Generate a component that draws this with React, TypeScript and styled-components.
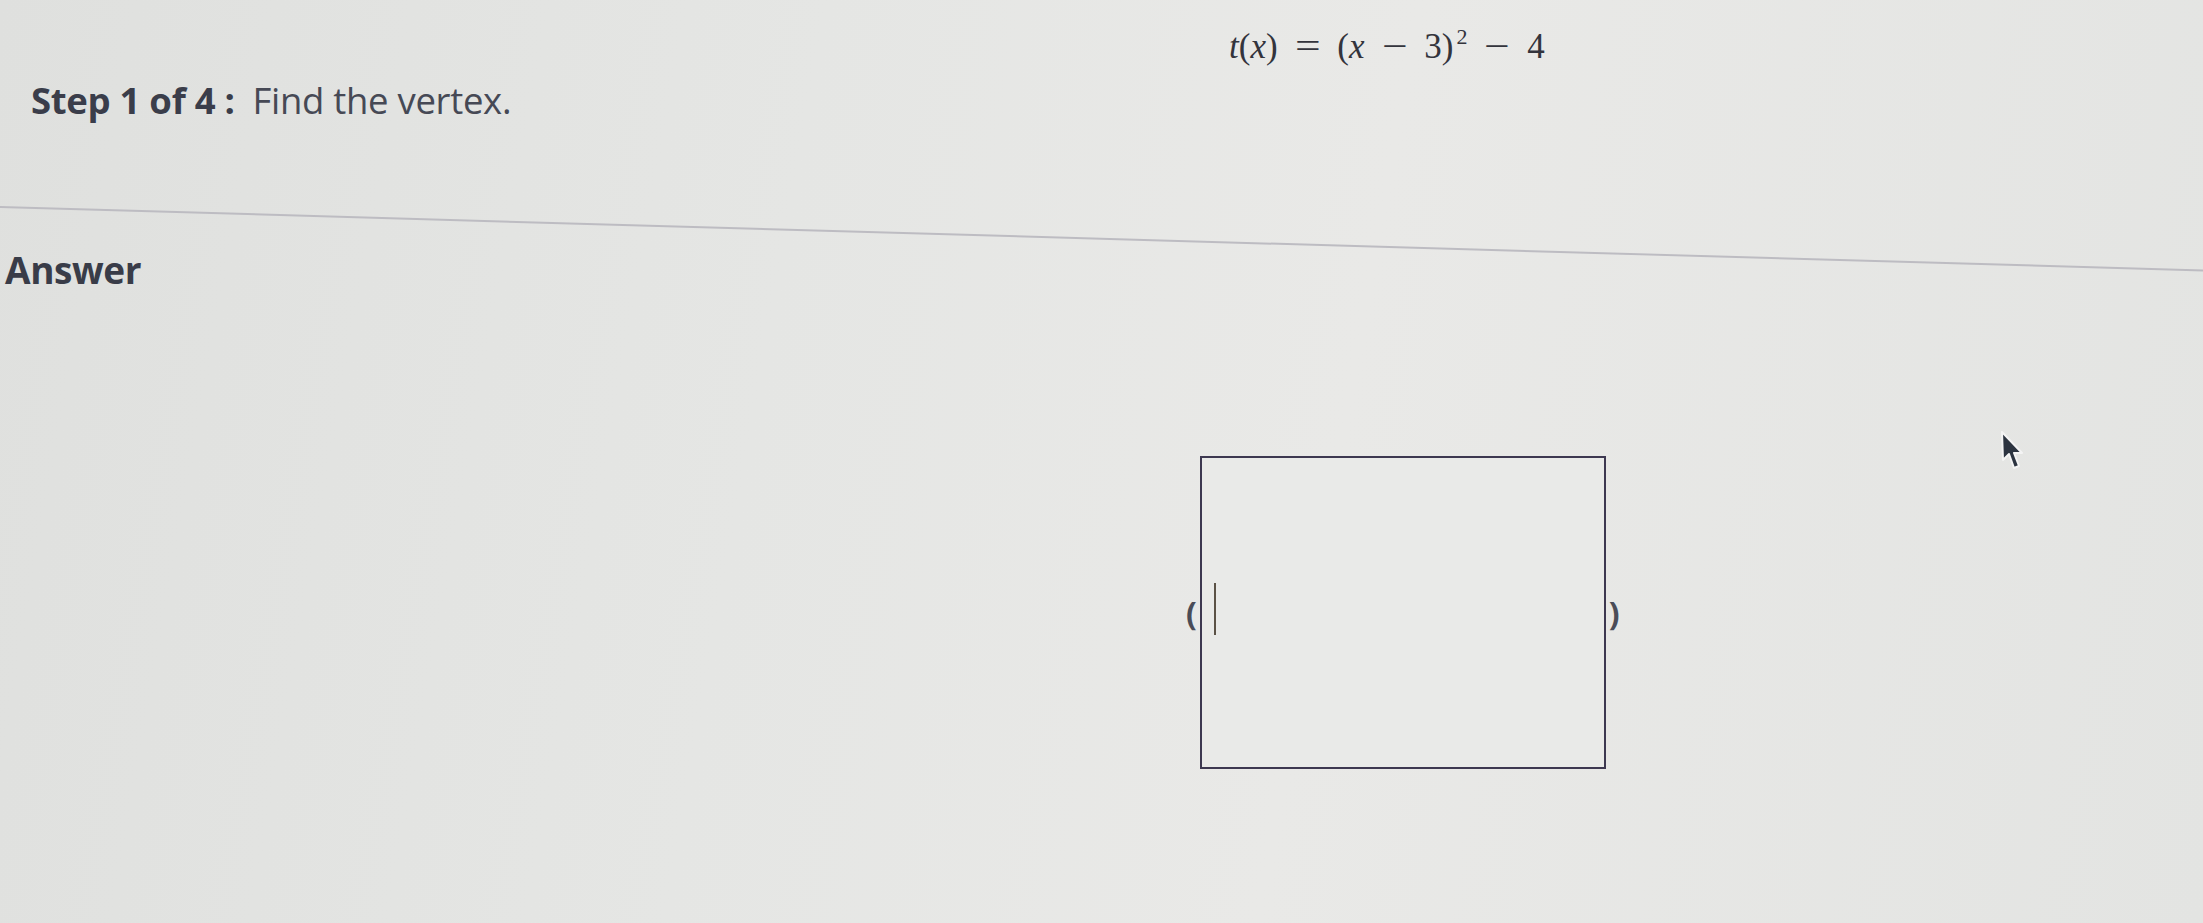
import { FunctionComponent } from 'react';
import styled, { createGlobalStyle } from 'styled-components';

const GlobalStyle = createGlobalStyle`
  html, body {
    margin: 0;
    padding: 0;
  }
  body {
    font-family: 'Open Sans', 'Noto Sans', sans-serif;
    overflow: hidden;
  }
`;

const Page = styled.div`
  position: relative;
  width: 2203px;
  height: 923px;
  overflow: hidden;
  background: linear-gradient(100deg, #dfe0de 0%, #e5e6e4 35%, #e9e9e7 60%, #e3e4e2 100%);
  color: #3b3e49;
`;

const EquationRow = styled.div`
  padding: 27px 0 0 1229px;
  height: 50px;
`;

const Equation = styled.div`
  font-family: 'Liberation Serif', 'Times New Roman', serif;
  font-size: 35px;
  line-height: 40px;
  color: #33343c;
  white-space: nowrap;

  i {
    font-style: italic;
  }

  sup {
    font-size: 22px;
    vertical-align: 14px;
    line-height: 0;
    padding-left: 3px;
  }
`;

const Op = styled.span`
  display: inline-block;
  padding: 0 20px;
  transform: scaleX(1.3);
`;

const StepLine = styled.div`
  padding: 0 0 0 31px;
  font-size: 36.5px;
  line-height: 46px;
  letter-spacing: -0.3px;
`;

const StepLabel = styled.span`
  font-weight: 700;
  color: #3a3d4a;
  margin-right: 18px;
`;

const StepText = styled.span`
  color: #464955;
`;

const Divider = styled.div`
  margin-top: 83px;
  height: 2px;
  background: #bdbcc2;
  transform: rotate(1.65deg);
  transform-origin: left center;
  width: 2260px;
`;

const AnswerLabel = styled.div`
  padding: 40px 0 0 5px;
  font-size: 37px;
  font-weight: 700;
  color: #393c48;
  letter-spacing: -0.4px;
  line-height: 44px;
`;

const AnswerRow = styled.div`
  display: flex;
  align-items: center;
  padding: 164px 0 0 1185px;
`;

const Paren = styled.span`
  font-size: 32px;
  font-weight: 700;
  color: #4a4c57;
  line-height: 1;
  padding: 0 1px;
`;

const InputBox = styled.div`
  width: 406px;
  height: 313px;
  border: 2px solid #3d3850;
  background: #e9eae8;
  display: flex;
  align-items: center;
  padding-left: 12px;
  box-sizing: border-box;
  margin: 0 2px;
`;

const Caret = styled.span`
  display: block;
  width: 2px;
  height: 52px;
  margin-top: -8px;
  background: #5b5246;
`;

const Pointer = styled.svg`
  position: absolute;
  left: 2000px;
  top: 431px;
  width: 26px;
  height: 42px;
`;

const App: FunctionComponent = () => {
  return (
    <Page>
      <GlobalStyle />
      <EquationRow>
        <Equation>
          <i>t</i>(<i>x</i>)<Op>=</Op>(<i>x</i>
          <Op>−</Op>3)<sup>2</sup>
          <Op>−</Op>4
        </Equation>
      </EquationRow>
      <StepLine>
        <StepLabel>Step 1 of 4 :</StepLabel>
        <StepText>Find the vertex.</StepText>
      </StepLine>
      <Divider />
      <AnswerLabel>Answer</AnswerLabel>
      <AnswerRow>
        <Paren>(</Paren>
        <InputBox>
          <Caret />
        </InputBox>
        <Paren>)</Paren>
      </AnswerRow>
      <Pointer viewBox="0 0 26 42">
        <path
          d="M2 1 L3 29 L9 23 L14 37 L19 35 L14 22 L22 22 Z"
          fill="#2c3440"
          stroke="#f4f4f4"
          strokeWidth="2"
          strokeLinejoin="round"
        />
      </Pointer>
    </Page>
  );
};

export default App;
